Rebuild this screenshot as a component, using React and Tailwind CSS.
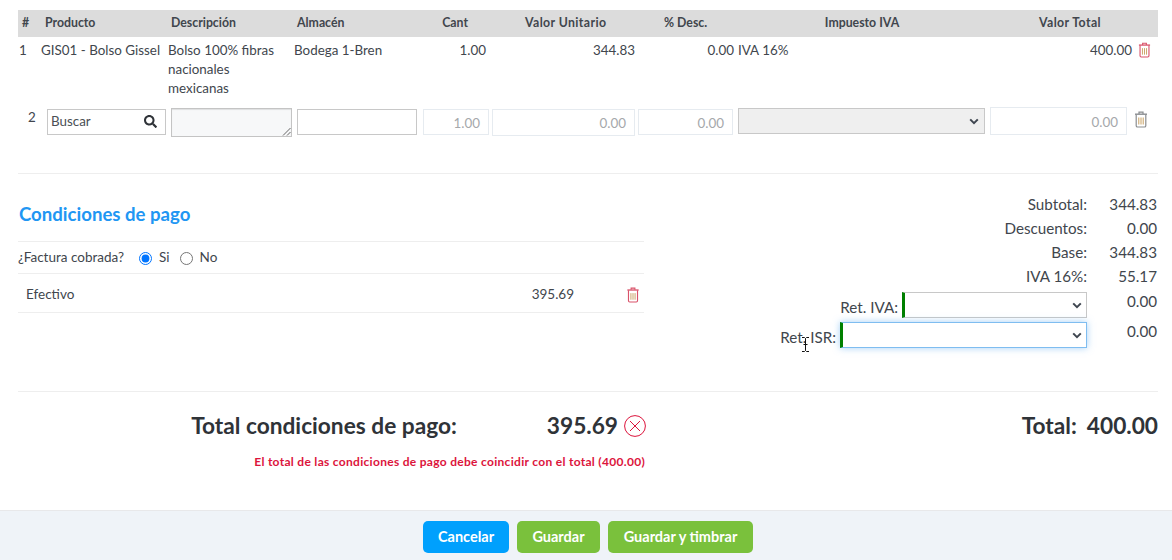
import React from 'react';
import { FaSearch } from 'react-icons/fa';

const FONT = "font-['Lato','Noto_Sans',sans-serif]";

function TrashIcon({ className }) {
  return (
    <svg viewBox="0 0 14 17" fill="none" className={className} aria-hidden>
      <path d="M1 3.2h12" stroke="currentColor" strokeWidth="1.4" />
      <path d="M5 3V1.2h4V3" stroke="currentColor" strokeWidth="1.2" />
      <path d="M2.2 3.5v11.2c0 .8.5 1.3 1.3 1.3h7c.8 0 1.3-.5 1.3-1.3V3.5" stroke="currentColor" strokeWidth="1.2" />
      <path d="M4.8 6.5v7M7 6.5v7M9.2 6.5v7" stroke="#c8a060" strokeWidth="1" />
    </svg>
  );
}

function Chevron({ className }) {
  return (
    <svg viewBox="0 0 10 7" fill="none" className={className} aria-hidden>
      <path d="M1.2 1.4 5 5.2l3.8-3.8" stroke="#3f4650" strokeWidth="2" />
    </svg>
  );
}

function NumberBox({ value, className }) {
  return (
    <div className={`flex items-center justify-end border border-[#e6ebf0] bg-white pt-[2px] pr-2 text-[#a5a8ab] ${className}`}>
      {value}
    </div>
  );
}

function SummaryRow({ label, value }) {
  return (
    <div className="flex h-6 items-center justify-end">
      <span>{label}</span>
      <span className="w-[70px] text-right">{value}</span>
    </div>
  );
}

function RetRow({ label, selectWidth, focused, className }) {
  return (
    <div className={`flex h-[26px] items-start justify-end ${className}`}>
      <span className="mt-[4px] mr-1">{label}</span>
      <div
        className={`flex h-[26px] items-center justify-end border border-l-[3px] border-l-[#008000] bg-white pr-[4px] ${selectWidth} ${
          focused ? 'border-[#7fbdf0] shadow-[0_0_7px_rgba(90,170,240,0.55)]' : 'border-[#c8c8c8]'
        }`}
      >
        <Chevron className="h-[7px] w-[10px]" />
      </div>
      <span className="-mt-[2px] w-[70px] text-right">0.00</span>
    </div>
  );
}

export default function App() {
  return (
    <div className={`relative flex h-[560px] flex-col bg-white text-[14px] text-[#41464d] ${FONT}`}>
      <main className="flex-1 pt-[10px] pr-[14px] pl-[18px]">
        {/* Concept table */}
        <div className="grid h-[27px] grid-cols-[23px_127px_126px_126px_70px_146px_100px_252px_144px_26px] items-center bg-[#dcdcdc] text-[12.3px] font-bold text-[#41464d]">
          <span className="pl-1">#</span>
          <span className="pl-1">Producto</span>
          <span className="pl-[3px]">Descripción</span>
          <span className="pl-[3px]">Almacén</span>
          <span className="pr-[22px] text-right">Cant</span>
          <span className="pl-[35px] tracking-[0.4px] whitespace-nowrap">Valor Unitario</span>
          <span className="pl-7">% Desc.</span>
          <span className="text-center">Impuesto IVA</span>
          <span className="pl-[51px] tracking-[0.4px] whitespace-nowrap">Valor Total</span>
          <span />
        </div>

        <div className="grid grid-cols-[23px_127px_126px_126px_70px_146px_100px_252px_144px_26px] items-start pt-1 text-[13.4px] leading-[19px]">
          <span className="pl-px">1</span>
          <span className="whitespace-nowrap">GIS01 - Bolso Gissel</span>
          <span className="pr-2">Bolso 100% fibras nacionales mexicanas</span>
          <span>Bodega 1-Bren</span>
          <span className="pr-1 text-right">1.00</span>
          <span className="pr-px text-right">344.83</span>
          <span className="pr-[2px] text-right">0.00</span>
          <span className="pl-[2px]">IVA 16%</span>
          <span className="text-right">400.00</span>
          <span className="pl-[6px] pt-px">
            <TrashIcon className="h-[16px] w-[13px] text-[#d9536a]" />
          </span>
        </div>

        <div className="mt-[9px] grid h-[30px] grid-cols-[23px_127px_126px_126px_70px_146px_100px_252px_144px_26px] items-start text-[13.4px]">
          <span className="pl-[10px]">2</span>
          <div className="mt-[2px] ml-[6px] flex h-[26px] w-[119px] items-center justify-between border border-[#c8c8c8] pr-[8px] pb-px pl-[3px] text-[#4a4f55]">
            <span>Buscar</span>
            <FaSearch className="h-[13px] w-[13px] text-[#2f3338]" />
          </div>
          <div className="relative mt-px ml-[3px] h-[29px] w-[121px] border border-[#c4c4c4] bg-[#f7f8f9] shadow-[inset_0_1px_1px_rgba(0,0,0,0.1)]">
            <svg viewBox="0 0 9 9" className="absolute right-0 bottom-0 h-[9px] w-[9px]" aria-hidden>
              <path d="M1 8.5 8.5 1M5 8.5 8.5 5" stroke="#555" strokeWidth="0.9" />
            </svg>
          </div>
          <div className="mt-[2px] ml-[3px] h-[26px] w-[120px] border border-[#c8c8c8]" />
          <NumberBox value="1.00" className="mt-[2px] ml-[3px] h-[26px] w-[66px]" />
          <NumberBox value="0.00" className="mt-[2px] ml-[2px] h-[27px] w-[143px]" />
          <NumberBox value="0.00" className="mt-[2px] ml-[2px] h-[26px] w-[95px]" />
          <div className="mt-px ml-[2px] flex h-[26px] w-[247px] items-center justify-end border border-[#c8c8c8] bg-[#efefef] pr-[5px]">
            <Chevron className="h-[7px] w-[10px]" />
          </div>
          <NumberBox value="0.00" className="ml-[2px] h-[28px] w-[137px] pt-[3px]" />
          <span className="pl-[2px] pt-[4px]">
            <TrashIcon className="h-[17px] w-[14px] text-[#8a8d90]" />
          </span>
        </div>

        <hr className="mt-[36px] border-[#eeeeee]" />

        {/* Payment conditions and summary */}
        <div className="flex justify-between">
          <section className="w-[626px] pt-[28px]">
            <h2 className="h-[24px] pl-px text-[18.6px] leading-[24px] font-bold text-[#2196f3]">Condiciones de pago</h2>
            <div className="mt-[15px] flex h-[33px] items-center border-y border-[#eeeeee] pb-px text-[13.5px]">
              <span className="mr-[15px]">¿Factura cobrada?</span>
              <input type="radio" name="cobrada" defaultChecked className="mt-[3px] mr-[7px] h-[13px] w-[13px] accent-[#0075ff]" />
              <span className="mr-[10px]">Si</span>
              <input type="radio" name="cobrada" className="mt-[3px] mr-[7px] h-[13px] w-[13px]" />
              <span>No</span>
            </div>
            <div className="flex h-[39px] items-center border-b border-[#eeeeee] pt-[3px] text-[13.5px]">
              <span className="ml-[8px] flex-1">Efectivo</span>
              <span className="mr-[52px]">395.69</span>
              <TrashIcon className="mr-[4px] h-[16px] w-[14px] text-[#d9536a]" />
            </div>
          </section>

          <section className="mr-px w-[480px] pt-[18px] text-[15.2px]">
            <SummaryRow label="Subtotal:" value="344.83" />
            <SummaryRow label="Descuentos:" value="0.00" />
            <SummaryRow label="Base:" value="344.83" />
            <SummaryRow label="IVA 16%:" value="55.17" />
            <RetRow label="Ret. IVA:" selectWidth="w-[185px]" className="mt-1" />
            <RetRow label="Ret. ISR:" selectWidth="w-[247px]" focused className="mt-1" />
          </section>
        </div>

        <hr className="mt-[43px] border-[#eeeeee]" />

        {/* Totals */}
        <div className="flex items-start justify-between pt-[19px] text-[22.7px] leading-[30px] font-bold text-[#2f3338]">
          <div className="w-[628px]">
            <div className="flex items-center justify-end">
              <span>Total condiciones de pago:</span>
              <span className="mr-[6px] ml-[90px]">395.69</span>
              <svg viewBox="0 0 22 22" fill="none" className="h-[22px] w-[22px]" aria-hidden>
                <circle cx="11" cy="11" r="10.4" stroke="#dc143c" strokeWidth="1" />
                <path d="M6 6l10 10M16 6 6 16" stroke="#dc143c" strokeWidth="1" />
              </svg>
            </div>
            <p className="mt-[14px] pr-px text-right text-[12px] leading-[14px] font-bold tracking-[0.3px] text-[#dc143c]">
              El total de las condiciones de pago debe coincidir con el total (400.00)
            </p>
          </div>
          <div className="flex gap-[10px]">
            <span>Total:</span>
            <span>400.00</span>
          </div>
        </div>
      </main>

      <footer className="flex h-[50px] justify-center gap-2 border-t border-[#e8e8ea] bg-[#eff3f8] pt-[10px] pl-[4px] text-[14.5px] font-bold text-white">
        <button type="button" className="h-[32px] w-[86px] rounded-[5px] bg-[#00a0fd]">Cancelar</button>
        <button type="button" className="h-[32px] w-[83px] rounded-[5px] bg-[#7ac13c]">Guardar</button>
        <button type="button" className="h-[32px] w-[145px] rounded-[5px] bg-[#7ac13c]">Guardar y timbrar</button>
      </footer>

      {/* text cursor over the Ret. ISR label */}
      <svg viewBox="0 0 9 15" fill="none" className="absolute top-[337px] left-[801px] h-[15px] w-[9px]" aria-hidden>
        <path d="M1 .5h2.5L4.5 1.5 5.5.5H8M4.5 1.5v12M1 14.5h2.5l1-1 1 1H8M2.5 7.5h4" stroke="#111" strokeWidth="1" />
      </svg>
    </div>
  );
}
